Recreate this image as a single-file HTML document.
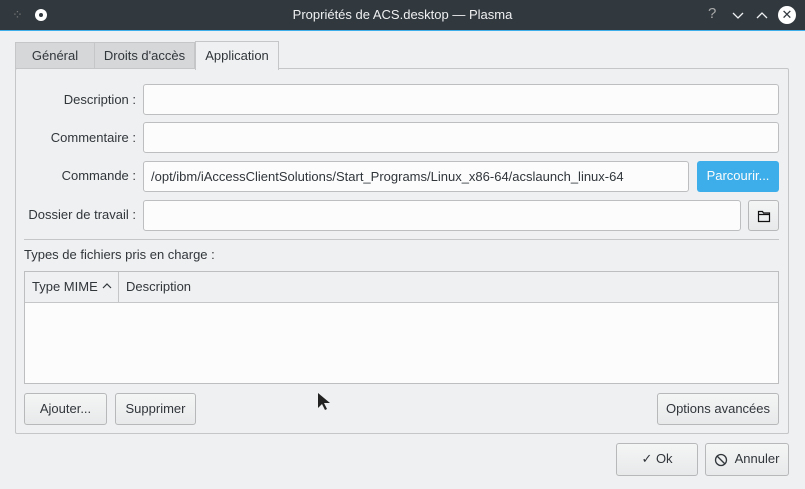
<!DOCTYPE html><html><head><style>
body{margin:0;width:805px;height:489px;background:#eff0f1;font-family:"Liberation Sans","DejaVu Sans",sans-serif;font-size:13px;color:#31363b;position:relative;overflow:hidden}
.a{position:absolute}
.tb{left:0;top:0;width:805px;height:30px;background:#31393f;color:#eff0f1;border-bottom:1px solid #3daee9}
.in{background:#fcfcfc;border:1px solid #bcbebf;border-radius:3px;box-sizing:border-box}
.bt{background:linear-gradient(#f4f5f5,#e8e9ea);border:1px solid #b6b8b9;border-radius:3px;box-sizing:border-box;text-align:center;line-height:30px}
.lb{text-align:right;width:136px;left:0}
</style></head><body>
<div class="a tb"><div class="a" style="left:12px;top:7px;color:#777">⁘</div><div class="a" style="left:35px;top:9px;width:12px;height:12px;border-radius:50%;background:#fff"><div class="a" style="left:4px;top:4px;width:4px;height:4px;border-radius:50%;background:#31393f"></div></div>
<div class="a" style="left:0;width:805px;top:7px;text-align:center;font-size:13px">Propriétés de ACS.desktop — Plasma</div>
<div class="a" style="left:708px;top:5px;font-size:15px;color:#aaa">?</div>
<svg class="a" style="left:730px;top:8px" width="16" height="14"><path d="M3 5l5 5 5-5" stroke="#eff0f1" stroke-width="1.3" fill="none"/></svg>
<svg class="a" style="left:754px;top:8px" width="16" height="14"><path d="M3 10l5-5 5 5" stroke="#eff0f1" stroke-width="1.3" fill="none"/></svg>
<div class="a" style="left:778px;top:6px;width:18px;height:18px;border-radius:50%;background:#fff;color:#31393f;text-align:center;line-height:18px;font-size:13px;font-weight:bold">✕</div></div>
<div class="a" style="left:15px;top:68px;width:774px;height:366px;border:1px solid #c4c6c7;border-radius:2px;box-sizing:border-box"></div>
<div class="a" style="left:15px;top:42px;width:80px;height:27px;background:#d5d7d8;border:1px solid #c4c6c7;box-sizing:border-box;text-align:center;line-height:26px">Général</div>
<div class="a" style="left:94px;top:42px;width:101px;height:27px;background:#d5d7d8;border:1px solid #c4c6c7;box-sizing:border-box;text-align:center;line-height:26px">Droits d'accès</div>
<div class="a" style="left:195px;top:41px;width:84px;height:29px;background:#eff0f1;border:1px solid #c4c6c7;border-bottom:none;box-sizing:border-box;text-align:center;line-height:28px">Application</div>
<div class="a lb" style="top:92px">Description :</div>
<div class="a in" style="left:143px;top:84px;width:636px;height:31px"></div>
<div class="a lb" style="top:130px">Commentaire :</div>
<div class="a in" style="left:143px;top:122px;width:636px;height:31px"></div>
<div class="a lb" style="top:168px">Commande :</div>
<div class="a in" style="left:143px;top:161px;width:546px;height:31px;padding-left:7px;line-height:29px">/opt/ibm/iAccessClientSolutions/Start_Programs/Linux_x86-64/acslaunch_linux-64</div>
<div class="a" style="left:697px;top:161px;width:82px;height:31px;background:#3daee9;border-radius:3px;color:#fcfcfc;text-align:center;line-height:30px">Parcourir...</div>
<div class="a lb" style="top:207px">Dossier de travail :</div>
<div class="a in" style="left:143px;top:200px;width:598px;height:31px"></div>
<div class="a bt" style="left:748px;top:200px;width:31px;height:31px"><svg class="a" style="left:8px;top:8px" width="14" height="14"><path d="M1.5 2.5h4l1 1.5h6v8.5h-11zM1.5 5.5h11" stroke="#111" stroke-width="1.2" fill="none"/></svg></div>
<div class="a" style="left:24px;top:239px;width:755px;height:1px;background:#c4c6c7"></div>
<div class="a" style="left:24px;top:247px">Types de fichiers pris en charge :</div>
<div class="a in" style="left:24px;top:271px;width:755px;height:113px;border-radius:0"></div>
<div class="a" style="left:25px;top:272px;width:753px;height:30px;background:#eff0f1;border-bottom:1px solid #c4c6c7"></div>
<div class="a" style="left:118px;top:272px;width:1px;height:30px;background:#c4c6c7"></div>
<div class="a" style="left:32px;top:279px">Type MIME</div>
<svg class="a" style="left:102px;top:281px" width="10" height="10"><path d="M1 7l4-4 4 4" stroke="#31363b" stroke-width="1.2" fill="none"/></svg>
<div class="a" style="left:126px;top:279px">Description</div>
<div class="a bt" style="left:24px;top:393px;width:83px;height:32px">Ajouter...</div>
<div class="a bt" style="left:115px;top:393px;width:81px;height:32px">Supprimer</div>
<div class="a bt" style="left:657px;top:393px;width:122px;height:32px">Options avancées</div>
<svg class="a" style="left:317px;top:392px" width="14" height="20"><path d="M1 1v15l4-4 3 6 2-1-3-6h6z" fill="#222"/></svg>
<div class="a bt" style="left:616px;top:443px;width:82px;height:33px">✓ Ok</div>
<div class="a bt" style="left:705px;top:443px;width:84px;height:33px"><svg class="a" style="left:8px;top:9px" width="14" height="14"><circle cx="7" cy="7" r="5.5" stroke="#31363b" stroke-width="1.3" fill="none"/><path d="M3 3l8 8" stroke="#31363b" stroke-width="1.3"/></svg><span style="margin-left:20px">Annuler</span></div>
</body></html>
